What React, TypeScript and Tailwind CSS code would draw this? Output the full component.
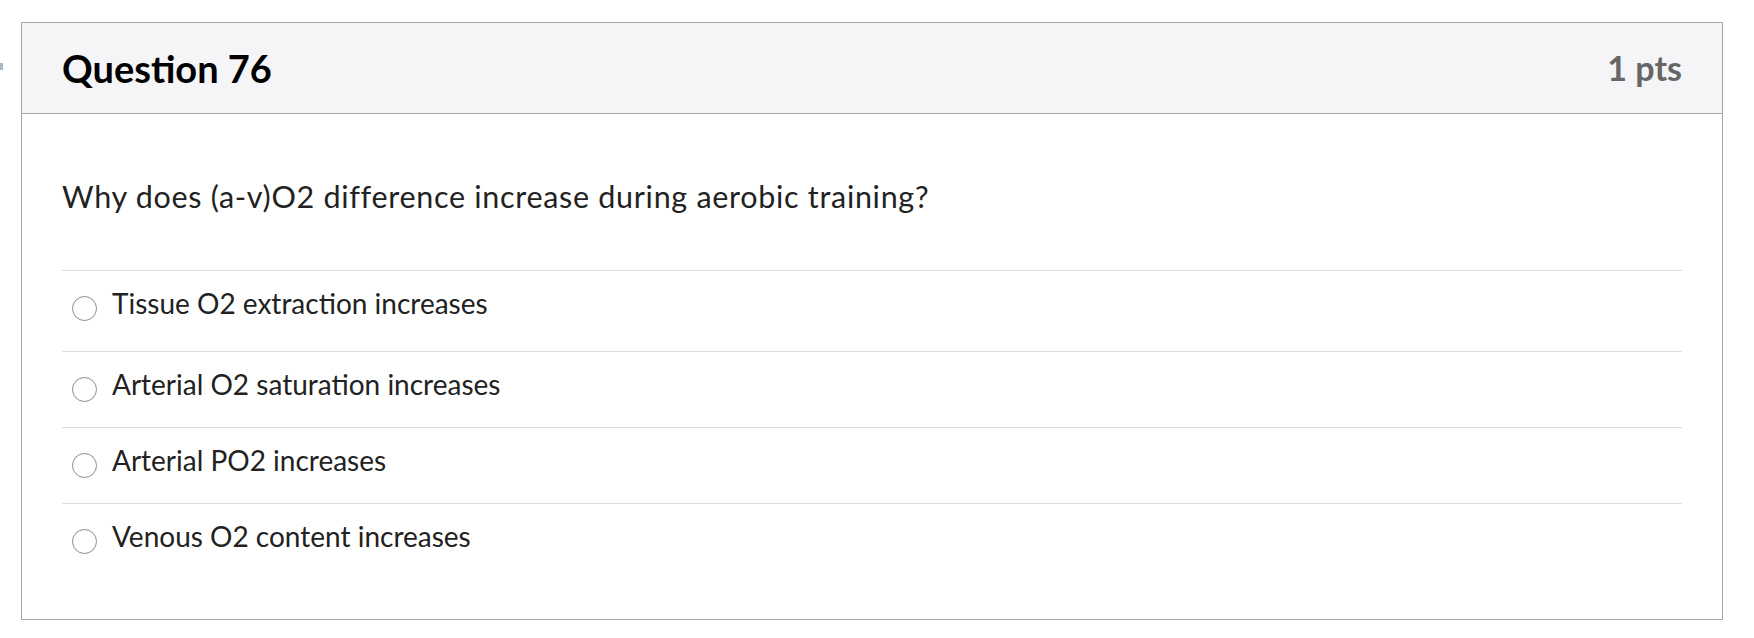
const answers = [
  'Tissue O2 extraction increases',
  'Arterial O2 saturation increases',
  'Arterial PO2 increases',
  'Venous O2 content increases',
];

export default function App() {
  return (
    <div
      className="w-[1754px] h-[638px] bg-white flex items-start"
      style={{ fontFamily: 'Lato, "Open Sans", sans-serif' }}
    >
      {/* bit of the page edge peeking in on the left */}
      <div className="w-[3px] h-[7px] mt-[63px] bg-[#a9b6c4] shrink-0" />

      <div className="ml-[18px] mt-[22px] w-[1702px] h-[598px] border-[1.5px] border-[#a8a8a8] flex flex-col">
        {/* Header */}
        <div className="h-[91px] shrink-0 bg-[#f5f5f7] border-b-[1.5px] border-[#a8a8a8] flex items-center justify-between pl-[40px] pr-[40px]">
          <h2 className="text-[38px] leading-[36px] font-bold text-black">Question 76</h2>
          <span className="text-[34px] leading-[36px] font-bold text-[#666666]">1 pts</span>
        </div>

        {/* Body */}
        <div className="flex-1 px-[40px] pt-[66px] text-[#222222]">
          <p className="text-[30.5px] leading-[33.6px] tracking-[0.7px]">
            Why does (a-v)O2 difference increase during aerobic training?
          </p>

          <div className="mt-[56px]">
            {answers.map((a, i) => (
              <label
                key={a}
                className={`flex items-start gap-[15px] pl-[10px] pt-[16px] border-t-[1.5px] border-[#dddddd] ${i === 0 ? 'pb-[30px]' : 'pb-[25px]'}`}
              >
                <span className="w-[25px] h-[25px] mt-[9px] rounded-full border-[1.5px] border-[#8c8c8c] bg-white shrink-0" />
                <span className="text-[28px] leading-[33.6px]">{a}</span>
              </label>
            ))}
          </div>
        </div>
      </div>
    </div>
  );
}
